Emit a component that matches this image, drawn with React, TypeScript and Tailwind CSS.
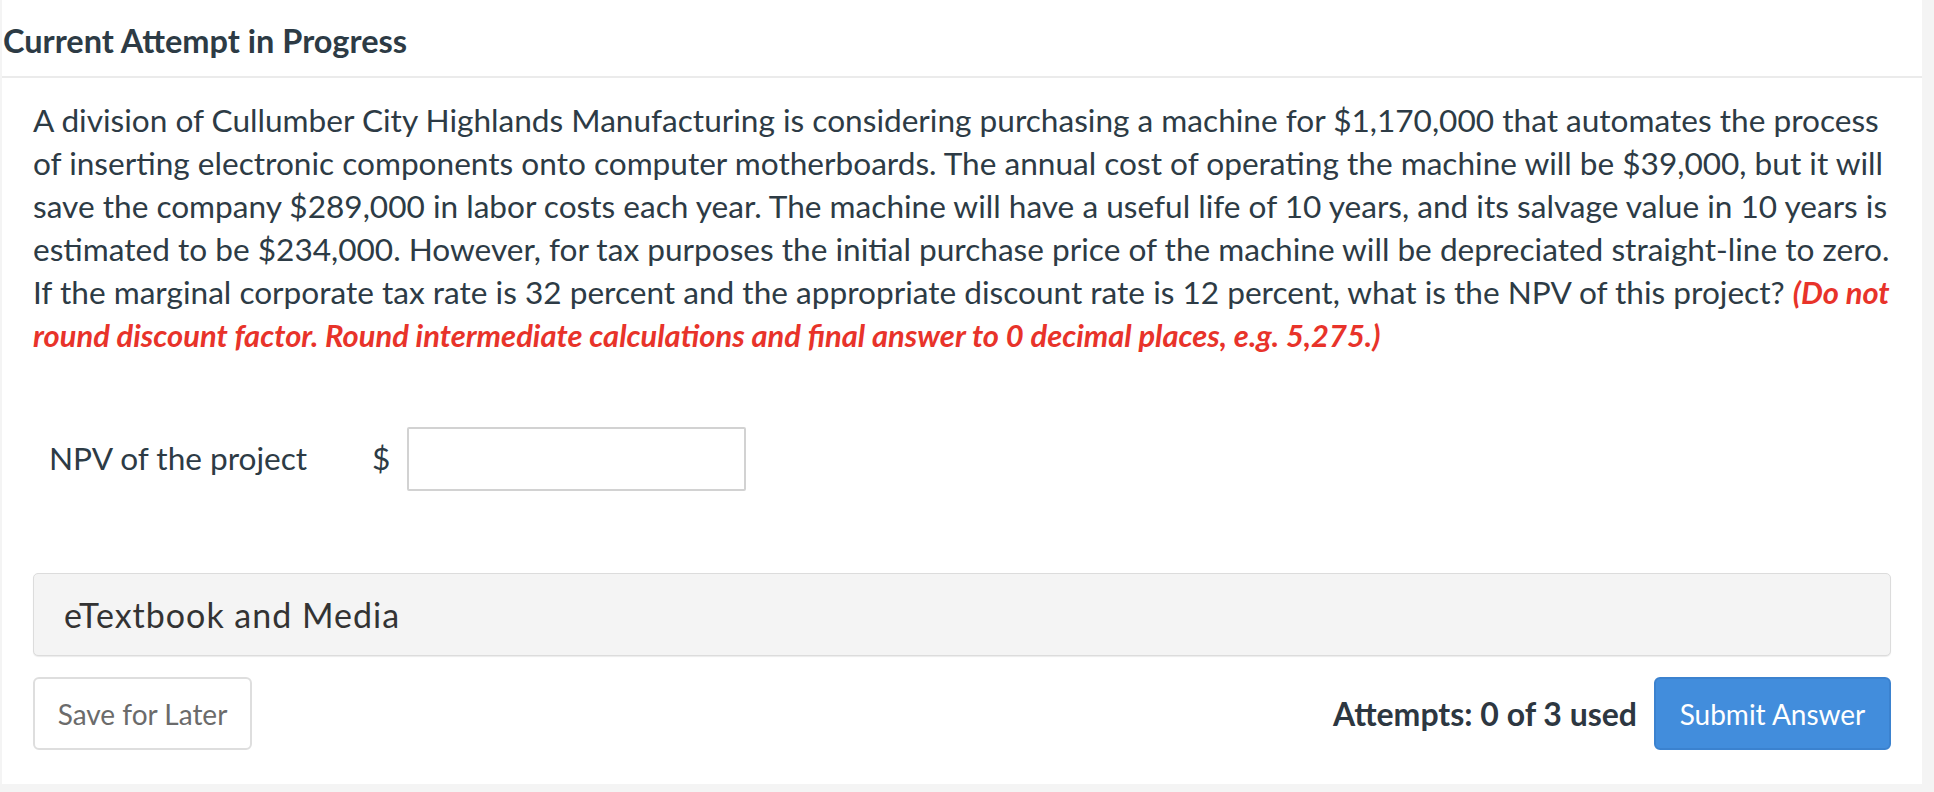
import React from "react";

const RED = "text-[#e8332a] font-bold italic text-[30.9px]";

export default function App() {
  return (
    <div
      className="w-[1934px] h-[792px] bg-[#f4f4f4] pl-[2px] pr-[12px] pb-[8px] overflow-hidden"
      style={{ fontFamily: "Lato, 'Open Sans', sans-serif" }}
    >
      <div className="bg-white h-full flex flex-col text-[#2d3b45]">
        <div className="h-[78px] shrink-0 flex items-center pl-[1px] pt-[6px] border-b-2 border-[#ebebeb]">
          <h1 className="text-[32.5px] font-bold leading-none">Current Attempt in Progress</h1>
        </div>
        <div className="px-[31px]">
          <p className="mt-[21px] text-[31.6px] leading-[43px]">
            <span className="block whitespace-nowrap">
              A division of Cullumber City Highlands Manufacturing is considering purchasing a machine for $1,170,000 that automates the process
            </span>
            <span className="block whitespace-nowrap">
              of inserting electronic components onto computer motherboards. The annual cost of operating the machine will be $39,000, but it will
            </span>
            <span className="block whitespace-nowrap">
              save the company $289,000 in labor costs each year. The machine will have a useful life of 10 years, and its salvage value in 10 years is
            </span>
            <span className="block whitespace-nowrap">
              estimated to be $234,000. However, for tax purposes the initial purchase price of the machine will be depreciated straight-line to zero.
            </span>
            <span className="block whitespace-nowrap">
              If the marginal corporate tax rate is 32 percent and the appropriate discount rate is 12 percent, what is the NPV of this project?{" "}
              <span className={RED}>(Do not</span>
            </span>
            <span className={`block whitespace-nowrap ${RED}`}>
              round discount factor. Round intermediate calculations and final answer to 0 decimal places, e.g. 5,275.)
            </span>
          </p>
          <div className="mt-[70px] flex items-center h-[64px] pl-[16px]">
            <span className="text-[31.6px] w-[323px]">NPV of the project</span>
            <span className="text-[31.6px] w-[35px]">$</span>
            <input
              type="text"
              className="w-[339px] h-[64px] border-2 border-[#d2d2d2] rounded-[2px] outline-none"
            />
          </div>
          <div className="mt-[82px] h-[83px] bg-[#f4f4f4] border border-[#dcdcdc] rounded-[5px] shadow-[0_1px_1px_rgba(0,0,0,0.08)] flex items-center pl-[30px]">
            <span className="text-[34px] tracking-[1px] text-[#333]">eTextbook and Media</span>
          </div>
          <div className="mt-[21px] flex items-center justify-between">
            <button className="h-[73px] w-[219px] border-2 border-[#dedede] rounded-[6px] bg-white text-[28px] text-[#6b6b6b]">
              Save for Later
            </button>
            <div className="flex items-center gap-[17px]">
              <span className="text-[32px] font-bold text-[#2d3741]">Attempts: 0 of 3 used</span>
              <button className="h-[73px] w-[237px] bg-[#428ddc] border-2 border-[#3b82cf] rounded-[6px] text-white text-[28px]">
                Submit Answer
              </button>
            </div>
          </div>
        </div>
      </div>
    </div>
  );
}
